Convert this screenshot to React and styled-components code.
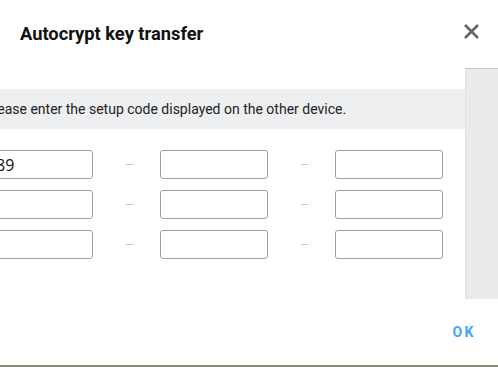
import React from 'react'
import styled, { createGlobalStyle } from 'styled-components'

const GlobalStyle = createGlobalStyle`
    html, body {
        margin: 0;
        padding: 0;
        background-color: #868a7c;
        overflow: hidden;
    }
    * {
        box-sizing: border-box;
    }
`
const Dialog = styled.div`
    width: 498px;
    height: 365px;
    background-color: white;
    display: flex;
    flex-direction: column;
    font-family: Roboto, "Liberation Sans", sans-serif;
    overflow: hidden;
`
const Header = styled.div`
    height: 68px;
    flex-shrink: 0;
    display: flex;
    align-items: center;
    justify-content: space-between;
    padding: 0 19px 0 20px;
`
const Title = styled.h1`
    margin: -2px 0 0;
    font-size: 18.3px;
    font-weight: 700;
    color: #111;
`
const CloseBtn = styled.button`
    border: none;
    background: none;
    padding: 0;
    width: 15px;
    height: 15px;
    display: flex;
    cursor: pointer;
    margin-top: -5px;
`
const Body = styled.div`
    height: 231px;
    flex-shrink: 0;
    display: flex;
`
const Content = styled.div`
    flex: 1;
    overflow: hidden;
    padding-top: 21px;
`
const Scrollbar = styled.div`
    width: 33px;
    background-color: #ebebeb;
    border-top: 1px solid #c4c4c4;
    border-left: 1px solid #e2e2e2;
`
const InfoBand = styled.div`
    height: 40px;
    background-color: #eeeff1;
    display: flex;
    align-items: center;
    font-size: 14px;
    color: #222;
    white-space: nowrap;
`
const InfoText = styled.span`
    margin-left: -15px;
`
const CodeGrid = styled.div`
    display: grid;
    grid-template-columns: 108px 67px 108px 67px 108px;
    row-gap: 11px;
    margin: 21px 0 0 -15px;
`
const CodeInput = styled.input`
    height: 29px;
    width: 108px;
    border: 1px solid #a0a0a0;
    border-radius: 3px;
    padding: 0 0 0 10px;
    font-family: "Open Sans", sans-serif;
    font-size: 16px;
    color: #111;
    outline: none;
`
const Dash = styled.span`
    align-self: center;
    justify-self: center;
    width: 7px;
    height: 1px;
    margin-left: 5px;
    background-color: #c6c6c6;
`
const Footer = styled.div`
    flex: 1;
    display: flex;
    justify-content: flex-end;
    align-items: center;
    padding: 0 22px 0 0;
`
const OkBtn = styled.button`
    border: none;
    background: none;
    font-family: Roboto, sans-serif;
    font-weight: 700;
    font-size: 14px;
    letter-spacing: 2.5px;
    color: #42a5f5;
    cursor: pointer;
    padding: 0;
`

const rows = [['89', '', ''], ['', '', ''], ['', '', '']]

export default function App() {
    return (
        <>
            <GlobalStyle />
            <Dialog>
                <Header>
                    <Title>Autocrypt key transfer</Title>
                    <CloseBtn aria-label="close">
                        <svg width="15" height="15" viewBox="0 0 15 15">
                            <path d="M1 1 L14 14 M14 1 L1 14" stroke="#666" strokeWidth="2.7" />
                        </svg>
                    </CloseBtn>
                </Header>
                <Body>
                    <Content>
                        <InfoBand>
                            <InfoText>Please enter the setup code displayed on the other device.</InfoText>
                        </InfoBand>
                        <CodeGrid>
                            {rows.map((row, i) => (
                                <React.Fragment key={i}>
                                    <CodeInput defaultValue={row[0]} />
                                    <Dash />
                                    <CodeInput defaultValue={row[1]} />
                                    <Dash />
                                    <CodeInput defaultValue={row[2]} />
                                </React.Fragment>
                            ))}
                        </CodeGrid>
                    </Content>
                    <Scrollbar />
                </Body>
                <Footer>
                    <OkBtn>OK</OkBtn>
                </Footer>
            </Dialog>
        </>
    )
}
